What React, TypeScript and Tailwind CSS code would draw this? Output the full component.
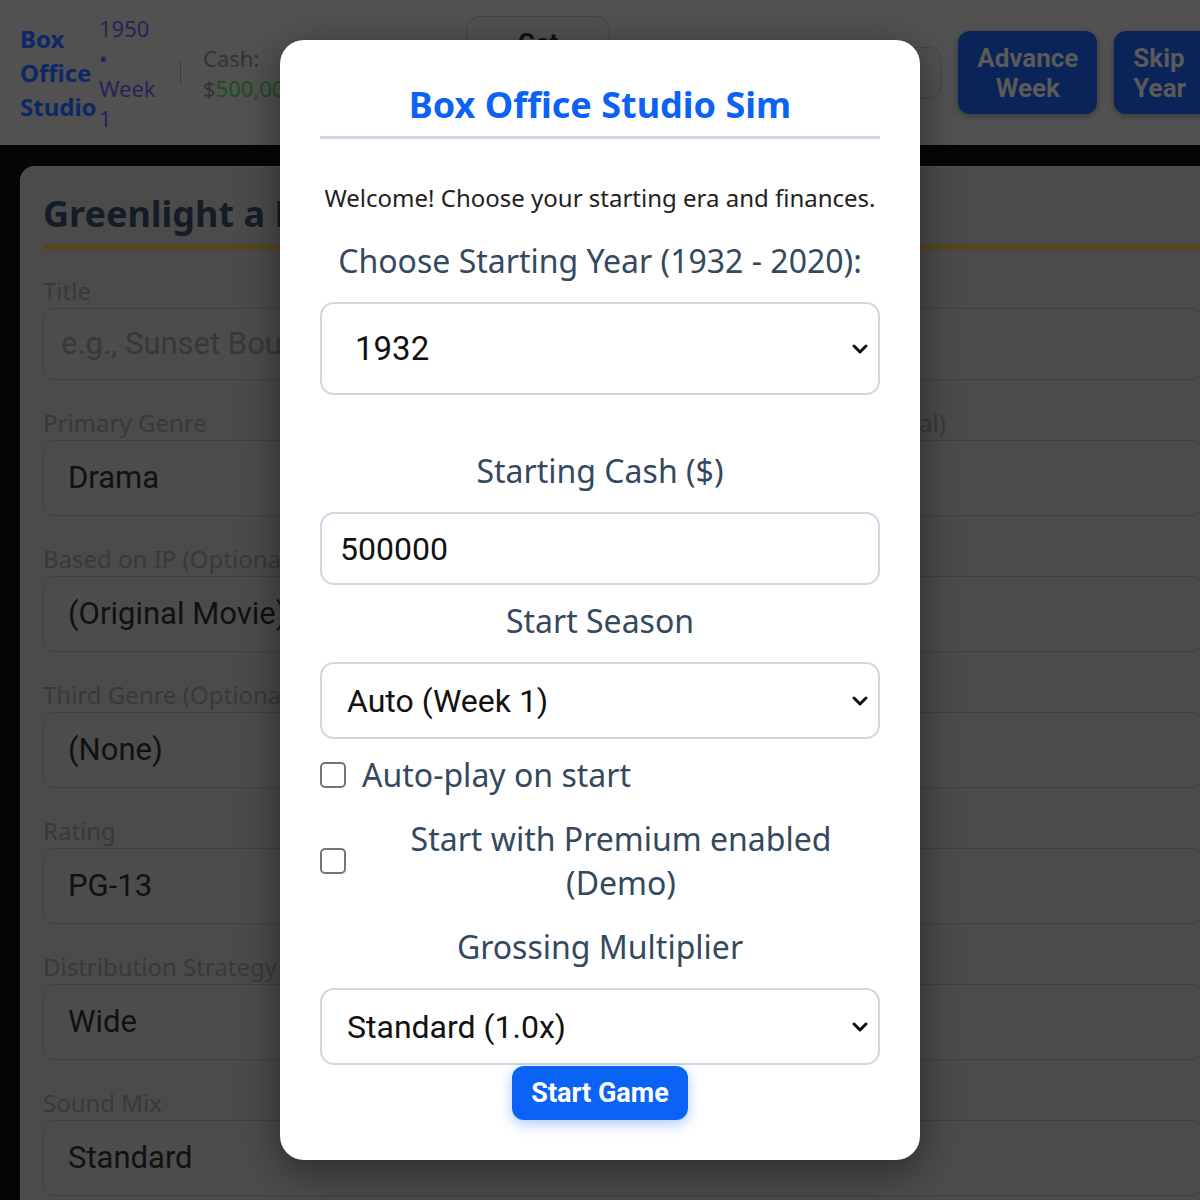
import React from "react";

const Chevron = () => (
  <svg width="18" height="12" viewBox="0 0 18 12" className="shrink-0">
    <path d="M3 3 L9 9 L15 3" fill="none" stroke="#111" strokeWidth="3" strokeLinecap="round" strokeLinejoin="round" />
  </svg>
);

type F = { label: string; value: string; placeholder?: boolean };

const left: F[] = [
  { label: "Title", value: "e.g., Sunset Boulevard", placeholder: true },
  { label: "Primary Genre", value: "Drama" },
  { label: "Based on IP (Optional)", value: "(Original Movie)" },
  { label: "Third Genre (Optional)", value: "(None)" },
  { label: "Rating", value: "PG-13" },
  { label: "Distribution Strategy", value: "Wide" },
];

const right: F[] = [
  { label: "Budget", value: "$1M", placeholder: true },
  { label: "Secondary Genre (Optional)", value: "(None)" },
  { label: "Director", value: "(None)" },
  { label: "Lead", value: "(None)" },
  { label: "Release", value: "Auto" },
  { label: "Marketing", value: "Low" },
];

function BgField({ f }: { f: F }) {
  return (
    <div className="flex flex-col">
      <div className="text-[24px] leading-[33px] text-[#393939] whitespace-nowrap">{f.label}</div>
      {f.placeholder ? (
        <div className="mt-[1px] h-[72px] rounded-[12px] border border-[#404040] bg-[#4c4c4c] flex items-center pl-[17px] font-['Roboto',sans-serif] text-[31px] text-[#383838] whitespace-nowrap overflow-hidden">
          {f.value}
        </div>
      ) : (
        <div className="mt-[1px] h-[76px] rounded-[12px] border border-[#404040] bg-[#4c4c4c] flex items-center pl-[24px] font-['Roboto',sans-serif] text-[31px] text-[#111] whitespace-nowrap overflow-hidden">
          {f.value}
        </div>
      )}
    </div>
  );
}

export default function App() {
  const rows = left.map((l, i) => [l, right[i]]);
  return (
    <div className="relative w-[1200px] h-[1200px] overflow-hidden bg-[#050505] font-['Noto_Sans',sans-serif]">
      <header className="h-[145px] bg-[#515151] flex items-center pl-5">
        <div className="w-[79px] shrink-0 text-[24px] leading-[34px] font-bold text-[#0c2866]">Box Office Studio</div>
        <div className="w-[60px] shrink-0 text-[22px] leading-[30px] text-[#26235a]">1950 • Week 1</div>
        <div className="ml-[21px] w-px h-[24px] bg-[#3d3d3d] shrink-0" />
        <div className="ml-[22px] w-[120px] shrink-0 text-[22px] leading-[30px] text-[#333]">
          Cash:
          <br />$<span className="text-[#1b4f1f]">500,000</span>
        </div>
        <button className="ml-[143px] shrink-0 w-[144px] h-[113px] rounded-[14px] border border-[#444] bg-[#515151] font-['Roboto',sans-serif] font-bold text-[26px] leading-[30px] text-[#111]">
          Get Premium Access
        </button>
        <button className="ml-[188px] shrink-0 h-[52px] px-[22px] rounded-[12px] border border-[#444] bg-[#515151] font-['Roboto',sans-serif] font-bold text-[26px] leading-[30px] text-[#111]">
          Settings
        </button>
        <button className="ml-[17px] shrink-0 w-[139px] h-[83px] rounded-[12px] bg-[#0a2358] font-['Roboto',sans-serif] font-bold text-[26px] leading-[30px] text-[#5a5a5a] shadow-[0_2px_6px_rgba(0,0,0,0.3)]">
          Advance Week
        </button>
        <button className="ml-[17px] shrink-0 w-[110px] h-[83px] rounded-[12px] bg-[#0a2358] font-['Roboto',sans-serif] font-bold text-[26px] leading-[30px] text-[#5a5a5a] text-left pl-[19px] shadow-[0_2px_6px_rgba(0,0,0,0.3)]">
          Skip Year
        </button>
      </header>

      <main className="pt-[21px] pl-5">
        <section className="w-[1206px] rounded-[14px] border border-[#525252] bg-[#4b4b4b] pt-[25px] px-[22px] pb-10">
          <h2 className="text-[36px] leading-[43px] font-bold text-[#141c27] pb-[10px] border-b-4 border-[#5c4508]">
            Greenlight a Film
          </h2>
          <div className="mt-[25px] grid grid-cols-2 gap-x-[24px] gap-y-[26px]">
            {rows.map(([l, r], i) => (
              <React.Fragment key={i}>
                <BgField f={l} />
                <BgField f={r} />
              </React.Fragment>
            ))}
            <div className="col-span-2">
              <BgField f={{ label: "Sound Mix", value: "Standard" }} />
            </div>
          </div>
        </section>
      </main>

      <div className="absolute inset-0 flex items-center justify-center">
        <div className="w-[640px] bg-white rounded-[24px] p-10 flex flex-col shadow-[0_12px_40px_rgba(0,0,0,0.45)]">
          <h2 className="text-center text-[36px] leading-[49px] font-bold text-[#0b62f4] pb-[7px] border-b-[3px] border-[#cfd8e3]">
            Box Office Studio Sim
          </h2>
          <p className="mt-[42px] text-center text-[24px] leading-[33px] text-[#222]">
            Welcome! Choose your starting era and finances.
          </p>
          <div className="mt-[25px] text-center text-[32px] leading-[44px] text-[#34495e]">
            Choose Starting Year (1932 - 2020):
          </div>
          <div className="mt-[19px] h-[93px] border-2 border-[#cfd8e3] rounded-[14px] flex items-center justify-between pl-[33px] pr-[9px] font-['Roboto',sans-serif] text-[33px] text-[#111]">
            <span>1932</span>
            <Chevron />
          </div>
          <div className="mt-[54px] text-center text-[32px] leading-[44px] text-[#34495e]">Starting Cash ($)</div>
          <div className="mt-[19px] h-[73px] border-2 border-[#cfd8e3] rounded-[14px] flex items-center pl-[18px] font-['Roboto',sans-serif] text-[32px] text-[#111]">
            500000
          </div>
          <div className="mt-[14px] text-center text-[32px] leading-[44px] text-[#34495e]">Start Season</div>
          <div className="mt-[19px] h-[77px] border-2 border-[#cfd8e3] rounded-[14px] flex items-center justify-between pl-[25px] pr-[9px] font-['Roboto',sans-serif] text-[32px] text-[#111]">
            <span>Auto (Week 1)</span>
            <Chevron />
          </div>
          <label className="mt-[14px] flex items-center gap-[16px] text-[32px] leading-[44px] text-[#34495e]">
            <span className="w-[26px] h-[26px] shrink-0 rounded-[5px] border-2 border-[#767676] bg-white" />
            <span className="text-center">Auto-play on start</span>
          </label>
          <label className="mt-[20px] flex items-center gap-[16px] text-[32px] leading-[44px] text-[#34495e]">
            <span className="w-[26px] h-[26px] shrink-0 rounded-[5px] border-2 border-[#767676] bg-white" />
            <span className="text-center">Start with Premium enabled (Demo)</span>
          </label>
          <div className="mt-[20px] text-center text-[32px] leading-[44px] text-[#34495e]">Grossing Multiplier</div>
          <div className="mt-[19px] h-[77px] border-2 border-[#cfd8e3] rounded-[14px] flex items-center justify-between pl-[25px] pr-[9px] font-['Roboto',sans-serif] text-[32px] text-[#111]">
            <span>Standard (1.0x)</span>
            <Chevron />
          </div>
          <button className="mt-[1px] self-center h-[54px] px-[19px] rounded-[12px] bg-[#0b63f6] text-white font-['Roboto',sans-serif] font-bold text-[27px] shadow-[0_4px_14px_rgba(11,99,246,0.35)]">
            Start Game
          </button>
        </div>
      </div>
    </div>
  );
}
